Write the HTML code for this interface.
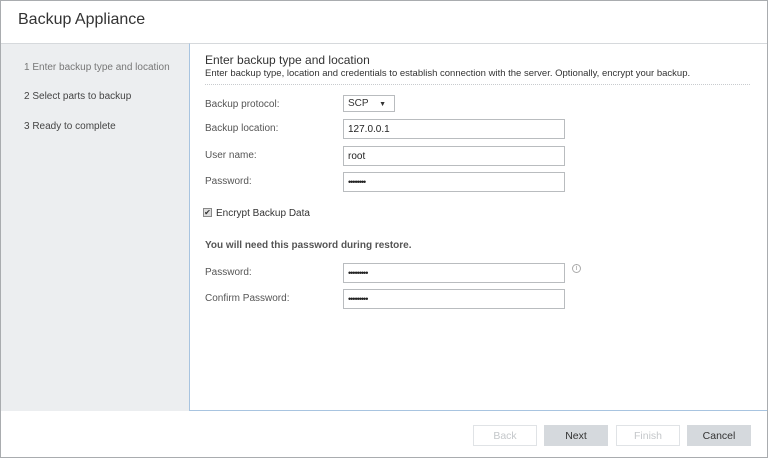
<!DOCTYPE html>
<html><head><style>
*{box-sizing:border-box;margin:0;padding:0}
body{width:768px;height:458px;overflow:hidden;background:#fff;font-family:"Liberation Sans",Arial,sans-serif;color:#333;position:relative}
.frame{position:absolute;left:0;top:0;width:768px;height:458px;border:1px solid #a9acaf}
.title{position:absolute;left:18px;top:11px;font-size:16px;color:#333}
.left{position:absolute;left:1px;top:43px;width:188px;height:368px;background:#eceef0;border-top:1px solid #d6d9dc}
.left div{position:absolute;left:23px;font-size:10px;color:#444}
.right{position:absolute;left:189px;top:43px;width:578px;height:368px;border-left:1px solid #a8c4e0;border-top:1px solid #d6d9dc;border-bottom:1px solid #a8c4e0}
.t{position:absolute;font-size:10px;color:#555}
.inp{position:absolute;left:343px;width:222px;height:20px;border:1px solid #b9bcbf;background:#fff;font-size:10px;padding:4px 0 0 4px;color:#222}
.pw{font-size:9px;padding-top:4px;letter-spacing:-1px}
.btn{position:absolute;top:425px;width:64px;height:21px;font-size:10.5px;text-align:center;line-height:20px;border:1px solid #e0e3e6;color:#c4c7ca}
.btn.on{background:#d5d9dd;border-color:#d5d9dd;color:#333}
</style></head><body>
<div class="frame"></div>
<div class="title">Backup Appliance</div>
<div class="left">
<div style="top:18px;color:#777">1 Enter backup type and location</div>
<div style="top:47px">2 Select parts to backup</div>
<div style="top:77px">3 Ready to complete</div>
</div>
<div class="right"></div>
<div class="t" style="left:205px;top:53px;font-size:12px;color:#333">Enter backup type and location</div>
<div class="t" style="left:205px;top:68px;font-size:9.5px;color:#333">Enter backup type, location and credentials to establish connection with the server. Optionally, encrypt your backup.</div>
<div style="position:absolute;left:205px;top:84px;width:545px;border-top:1px dotted #c8cbce"></div>
<div class="t" style="left:205px;top:99px">Backup protocol:</div>
<div style="position:absolute;left:343px;top:95px;width:52px;height:17px;border:1px solid #b9bcbf;font-size:10px;padding:2px 0 0 4px">SCP <span style="font-size:7px;margin-left:8px">▼</span></div>
<div class="t" style="left:205px;top:123px">Backup location:</div>
<div class="inp" style="top:119px">127.0.0.1</div>
<div class="t" style="left:205px;top:150px">User name:</div>
<div class="inp" style="top:146px">root</div>
<div class="t" style="left:205px;top:176px">Password:</div>
<div class="inp pw" style="top:172px">••••••••</div>
<div style="position:absolute;left:203px;top:208px;width:9px;height:9px;border:1px solid #888;background:#ddd;font-size:8px;line-height:8px;text-align:center">✔</div>
<div class="t" style="left:216px;top:208px;color:#333">Encrypt Backup Data</div>
<div class="t" style="left:205px;top:240px;font-weight:bold;color:#555">You will need this password during restore.</div>
<div class="t" style="left:205px;top:267px">Password:</div>
<div class="inp pw" style="top:263px">•••••••••</div>
<div style="position:absolute;left:572px;top:264px;width:9px;height:9px;border:1px solid #aaa;border-radius:50%;font-size:7px;line-height:8px;text-align:center;color:#999">i</div>
<div class="t" style="left:205px;top:293px">Confirm Password:</div>
<div class="inp pw" style="top:289px">•••••••••</div>
<div class="btn" style="left:473px">Back</div>
<div class="btn on" style="left:544px">Next</div>
<div class="btn" style="left:616px">Finish</div>
<div class="btn on" style="left:687px">Cancel</div>
</body></html>
